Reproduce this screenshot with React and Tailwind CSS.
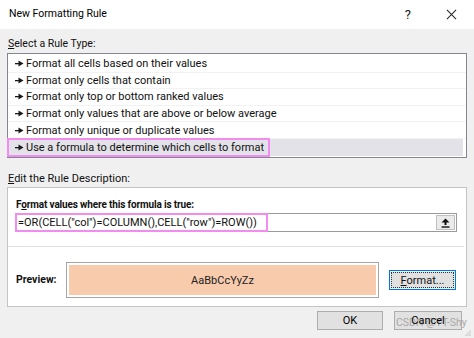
import React from "react";

const rules = [
  "Format all cells based on their values",
  "Format only cells that contain",
  "Format only top or bottom ranked values",
  "Format only values that are above or below average",
  "Format only unique or duplicate values",
  "Use a formula to determine which cells to format",
];

function Pointer() {
  return (
    <svg width="9" height="7" viewBox="0 0 9 7" className="shrink-0">
      <rect x="0" y="3" width="4" height="1.3" fill="#1a1a1a" />
      <path d="M3.5 0.5 L8.5 3.6 L3.5 6.6 Z" fill="#1a1a1a" />
    </svg>
  );
}

function Button({ children, className = "" }) {
  return (
    <div
      className={
        "flex items-center justify-center h-[19px] bg-[#e1e1e1] border border-[#adadad] text-[11px] text-black " +
        className
      }
    >
      {children}
    </div>
  );
}

export default function App() {
  return (
    <div
      className="w-[474px] h-[338px] bg-[#f0f0f0] flex flex-col overflow-hidden text-[#111] text-[11px] leading-none"
      style={{ fontFamily: 'Roboto, "Noto Sans", "Liberation Sans", sans-serif' }}
    >
      {/* Title bar */}
      <div className="h-[29px] bg-white flex items-center pl-[9px] shrink-0">
        <span className="text-[10.5px] text-black">New Formatting Rule</span>
        <span className="ml-auto text-[13px] text-[#222] mr-[35px]">?</span>
        <svg width="11" height="11" viewBox="0 0 12 12" className="mr-[17px]">
          <path d="M1 1 L11 11 M11 1 L1 11" stroke="#222" strokeWidth="1.1" />
        </svg>
      </div>

      <div className="flex flex-col px-[7px]">
        <div className="h-[24px] flex items-end pb-[4px] pl-[1px]">
          <span className="text-[10.5px]">
            <span className="underline">S</span>elect a Rule Type:
          </span>
        </div>

        {/* Rule list */}
        <div className="w-[460px] h-[105px] bg-white border border-[#828790] pt-[2px]">
          {rules.map((r, i) => {
            const sel = i === rules.length - 1;
            return (
              <div
                key={r}
                className={
                  "relative h-[16.6px] flex items-center gap-[2px] pl-[7px] " +
                  (sel ? "bg-[#e3e2e8] mr-[3px]" : "border-b border-[#f2f2f2]")
                }
              >
                <Pointer />
                <span className="text-[11px] whitespace-nowrap">{r}</span>
                {sel && (
                  <div className="absolute left-[-1px] top-[-1px] bottom-[-1px] w-[263px] border-2 border-[#f28cf0]" />
                )}
              </div>
            );
          })}
        </div>

        <div className="h-[29px] flex items-end pb-[3px] pl-[1px]">
          <span>
            <span className="underline">E</span>dit the Rule Description:
          </span>
        </div>

        {/* Description panel */}
        <div className="w-[460px] h-[120px] bg-white border border-[#c4c4c4] flex flex-col">
          <div className="h-[25px] flex items-end pl-[8px] pb-[3px] font-bold text-[10px] tracking-[-0.15px]">
            <span>
              F<span className="underline">o</span>rmat values where this formula is true:
            </span>
          </div>
          <div className="ml-[7px] w-[442px] h-[19px] border border-[#9a9a9a] flex items-center relative">
            <span className="pl-[2px] text-[11px] whitespace-nowrap">
              =OR(CELL("col")=COLUMN(),CELL("row")=ROW())
            </span>
            <div className="absolute left-[-1px] top-[-1px] bottom-[-1px] w-[253px] border-2 border-[#f28cf0]" />
            <div className="ml-auto mr-[1px] w-[19px] h-[15px] bg-[#ebebeb] border border-[#c0c0c0] flex items-center justify-center">
              <svg width="9" height="10" viewBox="0 0 9 10">
                <path d="M4.5 0.5 L8.5 4.5 L5.5 4.5 L5.5 7 L3.5 7 L3.5 4.5 L0.5 4.5 Z" fill="#111" />
                <rect x="0.5" y="8.3" width="8" height="1.4" fill="#111" />
              </svg>
            </div>
          </div>
          <div className="mt-[14px] h-px bg-[#e3e3e3] mr-[2px]" />
          <div className="flex items-center mt-[15px] pl-[8px]">
            <span className="font-bold w-[50px] text-[10.5px]">Preview:</span>
            <div className="w-[313px] h-[36px] border border-[#a5a5a5] p-[2px] bg-white">
              <div className="w-full h-full bg-[#f8cbad] flex items-center justify-center text-[11px] text-[#222]">
                AaBbCcYyZz
              </div>
            </div>
            <div className="ml-[10px] w-[67px] h-[20px] border border-[#0078d7] bg-[#e5f1fb] p-[1px]">
              <div className="w-full h-full border border-dotted border-[#333] flex items-center justify-center bg-[#e1e1e1]">
                <span>
                  <span className="underline">F</span>ormat...
                </span>
              </div>
            </div>
          </div>
        </div>

        {/* Footer */}
        <div className="flex justify-end mt-[4px] gap-[11px] pr-[5px]">
          <Button className="w-[66px]">OK</Button>
          <Button className="w-[68px] relative">
            <span className="relative z-10">Cancel</span>
            <span className="absolute left-[1px] top-[6px] text-[10.5px] text-[#a8a8a8] whitespace-nowrap">
              CSDN @YT-Shy
            </span>
          </Button>
        </div>
      </div>
      <div className="flex justify-end pr-[3px] mt-auto pb-[3px]">
        <svg width="6" height="6" viewBox="0 0 6 6">
          <circle cx="5" cy="1" r="0.6" fill="#999" />
          <circle cx="3" cy="3" r="0.6" fill="#999" />
          <circle cx="5" cy="3" r="0.6" fill="#999" />
          <circle cx="1" cy="5" r="0.6" fill="#999" />
          <circle cx="3" cy="5" r="0.6" fill="#999" />
          <circle cx="5" cy="5" r="0.6" fill="#999" />
        </svg>
      </div>
    </div>
  );
}
